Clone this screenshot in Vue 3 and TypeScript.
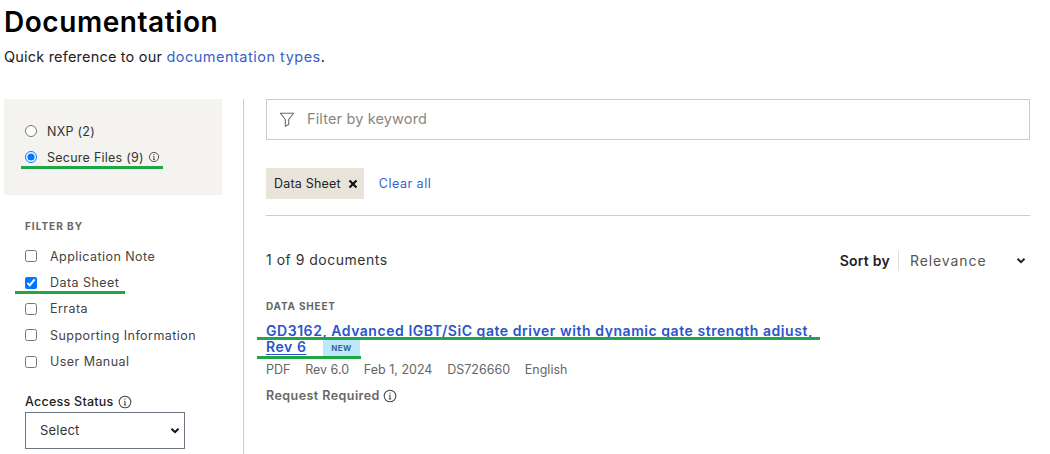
<script setup lang="ts">
const filters = [
  { name: 'Application Note', checked: false },
  { name: 'Data Sheet', checked: true },
  { name: 'Errata', checked: false },
  { name: 'Supporting Information', checked: false },
  { name: 'User Manual', checked: false },
]
const meta = ['PDF', 'Rev 6.0', 'Feb 1, 2024', 'DS726660', 'English']
</script>

<template>
  <div class="page">
    <h1 class="title">Documentation</h1>
    <p class="intro">Quick reference to our <a class="link">documentation types</a>.</p>
    <div class="layout">
      <aside class="side">
        <div class="source">
          <label class="radio"><input type="radio" name="src" /><span>NXP (2)</span></label>
          <label class="radio"><input type="radio" name="src" checked /><span>Secure Files (9)</span>
            <svg class="info small" viewBox="0 0 12 12"><circle cx="6" cy="6" r="4.6" /><path d="M6 5.4v3M5 8.6h2M5.2 5.3H6" /><circle class="dot" cx="6" cy="3.6" r=".6" /></svg>
          </label>
          <i class="mark mark-secure"></i>
        </div>
        <div class="filters">
          <div class="filter-head">FILTER BY</div>
          <label v-for="f in filters" :key="f.name" class="check">
            <input type="checkbox" :checked="f.checked" /><span>{{ f.name }}</span>
            <i v-if="f.checked" class="mark mark-sheet"></i>
          </label>
          <div class="access">Access Status
            <svg class="info" viewBox="0 0 12 12"><circle cx="6" cy="6" r="5" /><path d="M6 5.4v3M5 8.6h2M5.2 5.3H6" /><circle class="dot" cx="6" cy="3.5" r=".6" /></svg>
          </div>
          <div class="status-wrap">
            <select class="status"><option>Select</option></select>
            <svg class="status-arrow" viewBox="0 0 10 8"><path d="M1.5 1.7L5 5.2l3.5-3.5" /></svg>
          </div>
        </div>
      </aside>
      <main class="main">
        <div class="search">
          <svg class="funnel" viewBox="0 0 18 18"><path d="M1.5 2h15l-5.6 7v5.6l-3.8 2V9z" /></svg>
          <span>Filter by keyword</span>
        </div>
        <div class="chips">
          <span class="chip">Data Sheet
            <svg viewBox="0 0 10 10"><path d="M1.5 1.5l7 7M8.5 1.5l-7 7" /></svg>
          </span>
          <a class="link clear">Clear all</a>
        </div>
        <div class="toolbar">
          <span class="count">1 of 9 documents</span>
          <div class="sort">
            <b>Sort by</b>
            <span class="sort-value">Relevance</span>
            <svg viewBox="0 0 10 8"><path d="M1.5 1.7L5 5.2l3.5-3.5" /></svg>
          </div>
        </div>
        <div class="doc">
          <div class="doc-type">DATA SHEET</div>
          <div class="doc-title">
            <a>GD3162, Advanced IGBT/SiC gate driver with dynamic gate strength adjust,<br />Rev 6</a>
            <span class="badge">NEW</span>
            <i class="mark mark-t1"></i>
            <i class="mark mark-t2"></i>
          </div>
          <div class="doc-meta"><span v-for="m in meta" :key="m">{{ m }}</span></div>
          <div class="request">Request Required
            <svg class="info" viewBox="0 0 12 12"><circle cx="6" cy="6" r="5" /><path d="M6 5.4v3M5 8.6h2M5.2 5.3H6" /><circle class="dot" cx="6" cy="3.5" r=".6" /></svg>
          </div>
        </div>
      </main>
    </div>
  </div>
</template>

<style>
html, body { margin: 0; background: #fff; overflow: hidden; }
</style>

<style scoped>
.page {
  width: 1050px;
  height: 454px;
  overflow: hidden;
  box-sizing: border-box;
  padding: 5px 0 0 4px;
  font-family: Inter, "Noto Sans", sans-serif;
  color: #222;
  background: #fff;
}
.title {
  margin: 0;
  font-size: 28px;
  line-height: 34px;
  font-weight: 600;
  color: #000;
  letter-spacing: 0.55px;
}
.intro {
  margin: 8px 0 0;
  font-size: 14.5px;
  line-height: 20px;
  letter-spacing: .2px;
  color: #222;
}
.link { color: #3a5fc8; }
.intro .link { letter-spacing: .5px; }
.layout {
  display: flex;
  margin-top: 32px;
  height: 356px;
}
.side {
  width: 240px;
  box-sizing: border-box;
  padding-right: 21px;
  border-right: 1px solid #ccc;
  flex: none;
}
.source {
  position: relative;
  height: 96px;
  box-sizing: border-box;
  padding: 19px 0 0 21px;
  background: #f4f3ef;
  font-size: 12.5px;
  color: #333;
}
.radio {
  display: flex;
  align-items: center;
  height: 26px;
}
.radio input {
  width: 12px;
  height: 12px;
  margin: 0 10px 0 0;
  flex: none;
}
.radio span { letter-spacing: .25px; }
.mark {
  position: absolute;
  display: block;
  height: 3px;
  background: #1fa646;
}
.mark-secure { left: 17px; top: 67px; width: 142px; }
.filters { padding: 0 0 0 21px; }
.filter-head {
  margin-top: 24px;
  font-size: 10px;
  line-height: 14px;
  font-weight: 700;
  letter-spacing: 1px;
  color: #666;
}
.check {
  position: relative;
  display: flex;
  align-items: center;
  height: 26.35px;
  font-size: 12.5px;
  color: #444;
  letter-spacing: .45px;
}
.filter-head + .check { margin-top: 10px; }
.check input {
  width: 12px;
  height: 12px;
  margin: 0 13px 0 0;
  flex: none;
}
.mark-sheet { left: -10px; top: 22px; width: 110px; }
.access {
  display: flex;
  align-items: center;
  gap: 4px;
  margin-top: 17px;
  font-size: 12.5px;
  line-height: 20px;
  font-weight: 500;
  letter-spacing: .25px;
  color: #222;
}
.status-wrap {
  position: relative;
  width: 160px;
  height: 37px;
}
.status {
  display: block;
  width: 100%;
  height: 100%;
  padding-left: 14px;
  appearance: none;
  background: #fff;
  border: 1px solid #6b7680;
  border-radius: 0;
  font: 13px Inter, sans-serif;
  letter-spacing: .2px;
  color: #333;
}
.status-arrow {
  position: absolute;
  right: 5px;
  top: 15px;
  width: 10px;
  height: 8px;
  fill: none;
  stroke: #111;
  stroke-width: 2;
  pointer-events: none;
}
.info {
  width: 14px;
  height: 14px;
  flex: none;
  fill: none;
  stroke: #444;
  stroke-width: .9;
}
.info.small { width: 12px; height: 12px; margin-left: 4px; }
.info .dot { fill: #444; stroke: none; }
.main {
  width: 764px;
  margin-left: 22px;
  flex: none;
}
.search {
  display: flex;
  align-items: center;
  height: 41px;
  box-sizing: border-box;
  border: 1px solid #ccc;
  padding: 0 0 2px 12px;
  font-size: 14.5px;
  color: #8a8780;
  letter-spacing: .15px;
}
.funnel {
  width: 16px;
  height: 17px;
  margin: 2px 12px 0 0;
  fill: none;
  stroke: #6a6a6a;
  stroke-width: 1.2;
  stroke-linejoin: round;
}
.chips {
  display: flex;
  height: 48px;
  margin-top: 28px;
  padding-bottom: 16px;
  box-sizing: border-box;
  border-bottom: 1px solid #ccc;
}
.chip {
  display: flex;
  align-items: center;
  gap: 7px;
  height: 31px;
  flex: none;
  box-sizing: border-box;
  padding: 0 6px 0 8px;
  background: #e8e4da;
  font-size: 12.5px;
  color: #222;
  letter-spacing: .2px;
}
.chip svg {
  width: 10px;
  height: 10px;
  fill: none;
  stroke: #111;
  stroke-width: 2.2;
}
.clear {
  margin-left: 15px;
  font-size: 12.5px;
  line-height: 31px;
  letter-spacing: .5px;
}
.toolbar {
  display: flex;
  align-items: center;
  justify-content: space-between;
  height: 24px;
  margin-top: 31px;
}
.count {
  font-size: 14px;
  letter-spacing: .5px;
  color: #333;
}
.sort {
  display: flex;
  align-items: center;
  font-size: 14px;
  color: #222;
  margin-top: 3px;
  margin-right: 4px;
}
.sort b { font-weight: 600; padding-right: 8px; border-right: 1px solid #ddd; line-height: 20px; letter-spacing: .25px; }
.sort-value {
  width: 106px;
  padding-left: 11px;
  letter-spacing: .9px;
  color: #555;
}
.sort svg {
  width: 10px;
  height: 8px;
  fill: none;
  stroke: #222;
  stroke-width: 2;
}
.doc-type {
  margin-top: 28px;
  font-size: 10px;
  line-height: 14px;
  font-weight: 700;
  letter-spacing: .8px;
  color: #666;
}
.doc-title {
  position: relative;
  margin-top: 10px;
  font-size: 14px;
  line-height: 16px;
  font-weight: 600;
  letter-spacing: .55px;
  color: #2b55c9;
}
.doc-title a { text-decoration: underline; text-underline-offset: 2px; }
.badge {
  position: absolute;
  left: 57px;
  top: 17px;
  width: 37px;
  height: 16px;
  line-height: 16px;
  text-align: center;
  background: #bde8f9;
  color: #34659a;
  font-size: 8px;
  font-weight: 700;
  letter-spacing: .4px;
}
.mark-t1 { left: -9px; top: 14px; width: 563px; }
.mark-t2 { left: -9px; top: 33px; width: 104px; }
.doc-meta {
  display: flex;
  gap: 14.75px;
  margin-top: 5px;
  font-size: 12.5px;
  line-height: 20px;
  color: #666;
}
.request {
  display: flex;
  align-items: center;
  gap: 3px;
  margin-top: 6px;
  font-size: 12.5px;
  line-height: 20px;
  font-weight: 600;
  letter-spacing: .45px;
  color: #666;
}
</style>
